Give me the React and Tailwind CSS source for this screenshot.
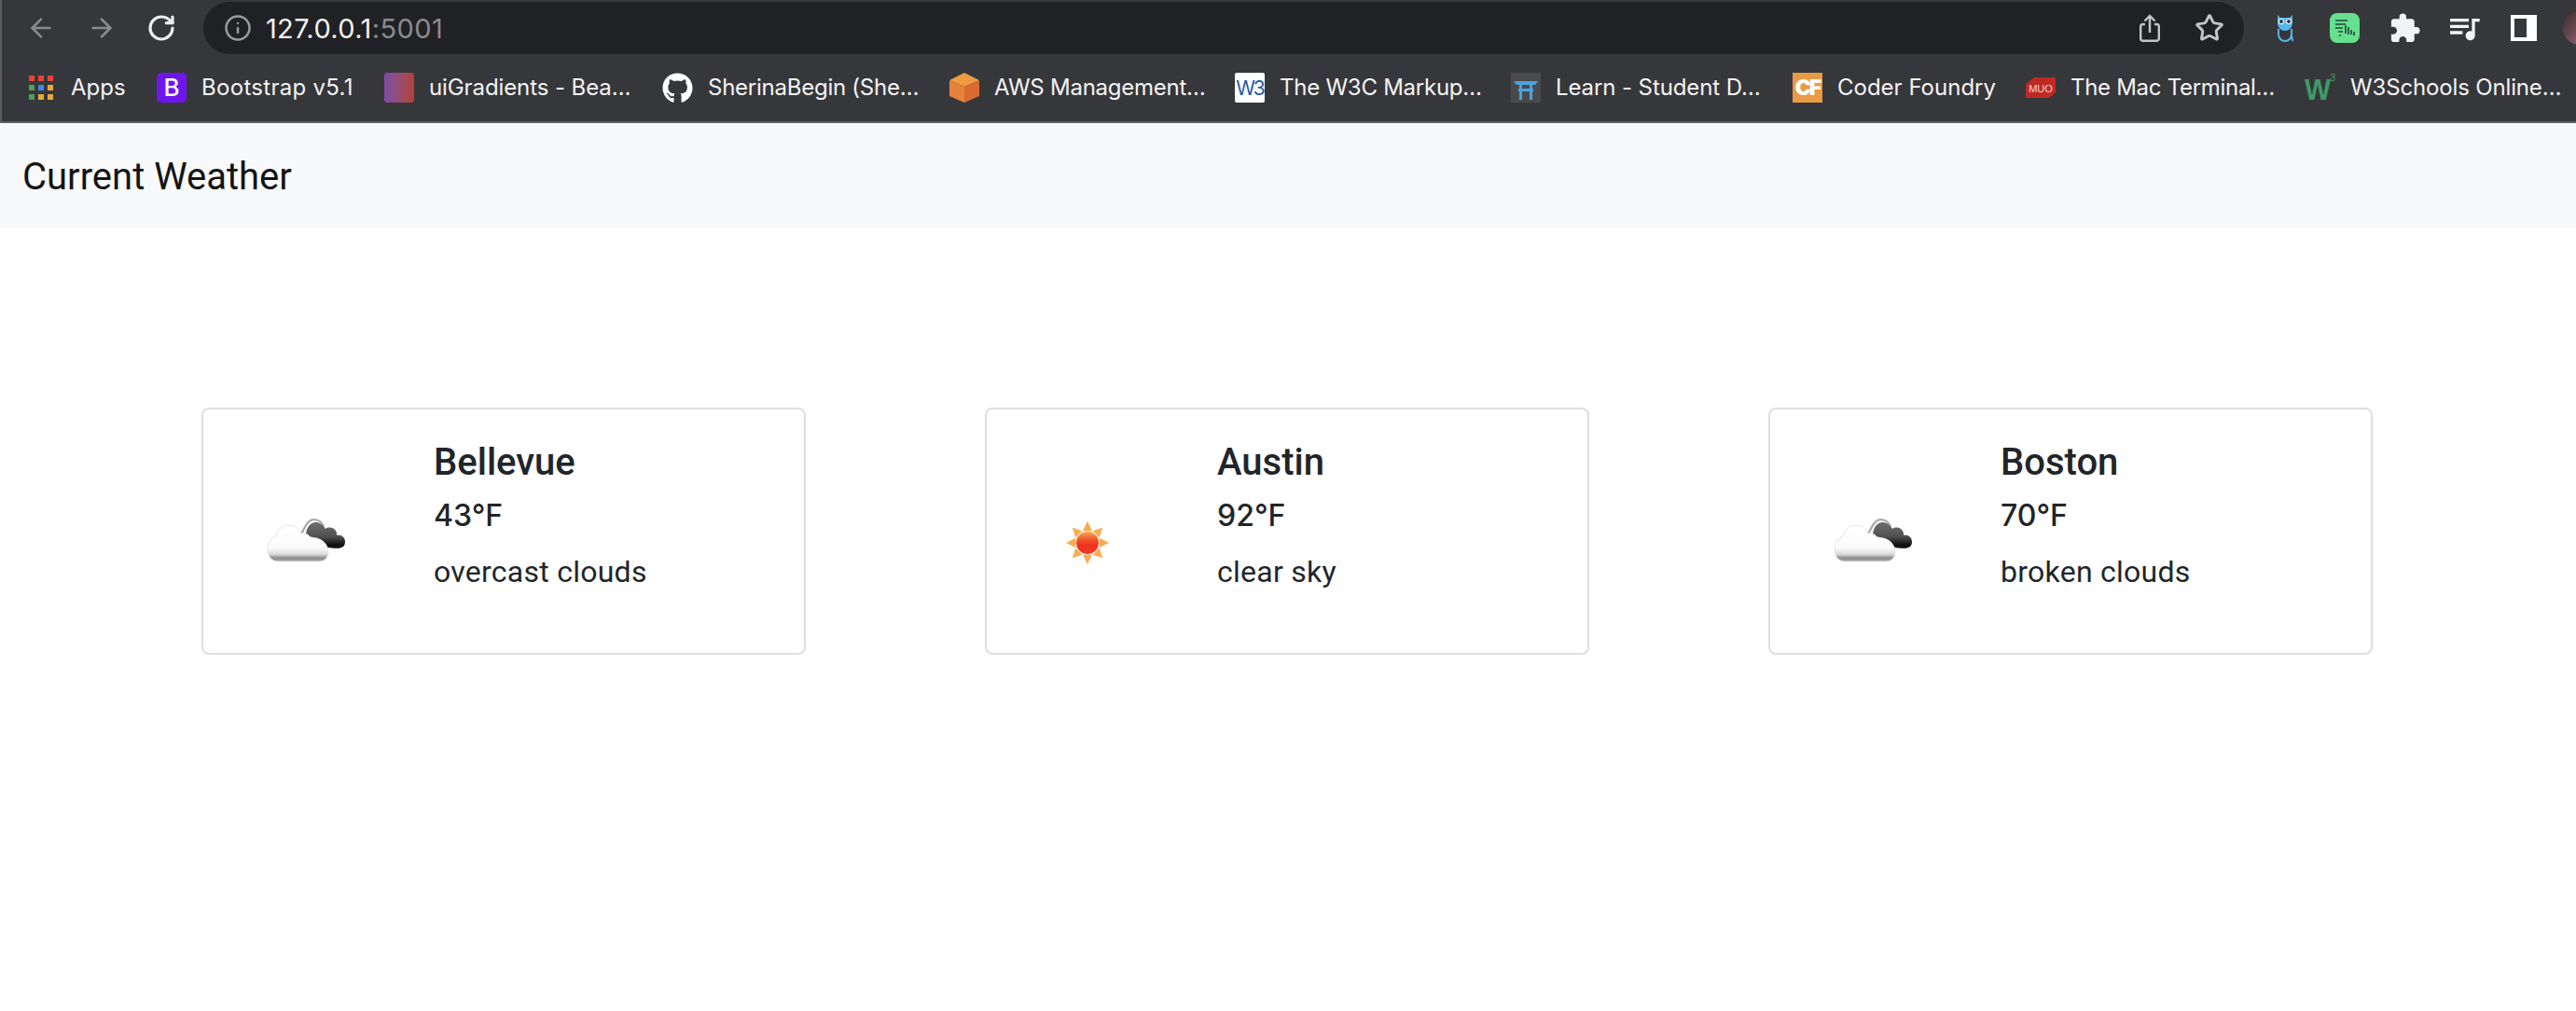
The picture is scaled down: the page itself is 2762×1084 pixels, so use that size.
import React from 'react';
import { ArrowLeft, ArrowRight, RotateCw, Info, Star } from 'lucide-react';
import { FaGithub } from 'react-icons/fa';
import { MdExtension, MdQueueMusic } from 'react-icons/md';

// favicons for the bookmarks bar
const AppsIcon = () => {
  const colors = ['#ea4335', '#ea4335', '#ea4335', '#4f9e5f', '#4285f4', '#e8a73c', '#4f9e5f', '#e8a73c', '#e8a73c'];
  return (
    <div className="grid grid-cols-3 gap-[4px] w-[26px]">
      {colors.map((c, i) => (
        <svg key={i} width="6" height="6"><rect width="6" height="6" fill={c} /></svg>
      ))}
    </div>
  );
};

const BootstrapIcon = () => (
  <div className="w-[32px] h-[32px] rounded-[5px] bg-[#6f16ee] flex items-center justify-center text-white text-[26px] leading-none font-medium">B</div>
);

const GradientIcon = () => (
  <div className="w-[32px] h-[32px] rounded-[3px] bg-gradient-to-r from-[#7b4ba8] to-[#b5402f]" />
);

const AwsIcon = () => (
  <svg width="32" height="32" viewBox="0 0 32 32">
    <polygon points="16,0 32,8 16,15 0,8" fill="#ee9c3f" />
    <polygon points="0,8 16,15 16,32 0,25" fill="#e58239" />
    <polygon points="32,8 16,15 16,32 32,25" fill="#d96a33" />
  </svg>
);

const W3cIcon = () => (
  <div className="w-[32px] h-[32px] rounded-[2px] bg-white flex items-center justify-center text-[#1f5aa6] text-[21px] leading-none font-normal tracking-[-2px]">W3</div>
);

const ToriiIcon = () => (
  <div className="w-[32px] h-[32px] bg-[#4a4a4c] flex items-center justify-center">
    <svg width="26" height="26" viewBox="0 0 26 26">
      <path d="M0 6h26l-3 4H3z" fill="#4aa3df" />
      <path d="M5 14h16v3H5zM6 10h3v16H6zM17 10h3v16h-3z" fill="#4aa3df" />
    </svg>
  </div>
);

const CfIcon = () => (
  <div className="w-[32px] h-[32px] bg-[#e99a45] flex items-center justify-center text-white text-[23px] leading-none font-black tracking-[-2px]">CF</div>
);

const MuoIcon = () => (
  <svg width="32" height="24" viewBox="0 0 32 24">
    <polygon points="9,1 32,1 32,17 25,23 0,23 0,8" fill="#bd2a24" />
    <text x="16" y="17" textAnchor="middle" fill="#f5d5d3" fontSize="11" fontFamily="Liberation Sans, sans-serif">MUO</text>
  </svg>
);

const W3SchoolsIcon = () => (
  <svg width="34" height="32" viewBox="0 0 34 32">
    <text x="0" y="29" fill="#3f9a68" fontSize="32" fontWeight="700" fontFamily="Liberation Sans, sans-serif" textLength="28" lengthAdjust="spacingAndGlyphs">W</text>
    <text x="27" y="9" fill="#3f9a68" fontSize="11" fontFamily="Liberation Sans, sans-serif">3</text>
  </svg>
);

const bookmarks = [
  { label: 'Apps', icon: <AppsIcon />, itemClass: 'w-[137px]', labelClass: 'ml-[19px]' },
  { label: 'Bootstrap v5.1', icon: <BootstrapIcon />, itemClass: 'w-[244px]', labelClass: 'ml-[16px] tracking-[0.3px]' },
  { label: 'uiGradients - Bea…', icon: <GradientIcon />, itemClass: 'w-[298px]', labelClass: 'ml-[16px] tracking-[-0.1px]' },
  { label: 'SherinaBegin (She…', icon: <FaGithub size={33} color="#ffffff" />, itemClass: 'w-[308px]', labelClass: 'ml-[16px] tracking-[-0.25px]' },
  { label: 'AWS Management…', icon: <AwsIcon />, itemClass: 'w-[306px]', labelClass: 'ml-[16px] tracking-[-0.25px]' },
  { label: 'The W3C Markup…', icon: <W3cIcon />, itemClass: 'w-[296px]', labelClass: 'ml-[16px] tracking-[-0.25px]' },
  { label: 'Learn - Student D…', icon: <ToriiIcon />, itemClass: 'w-[302px]', labelClass: 'ml-[16px] tracking-[-0.1px]' },
  { label: 'Coder Foundry', icon: <CfIcon />, itemClass: 'w-[250px]', labelClass: 'ml-[16px]' },
  { label: 'The Mac Terminal…', icon: <MuoIcon />, itemClass: 'w-[299px]', labelClass: 'ml-[16px] tracking-[-0.3px]' },
  { label: 'W3Schools Online…', icon: <W3SchoolsIcon />, itemClass: 'flex-1', labelClass: 'ml-[15px] tracking-[-0.15px]' },
];

const ShareIcon = () => (
  <svg width="22" height="30" viewBox="0 0 22 30" fill="none" stroke="#c4c5c7" strokeWidth="2.4">
    <path d="M6 11H3.500A2.500 2.500 0 0 0 1.200 13.500v12.800a2.500 2.500 0 0 0 2.300 2.500h15a2.500 2.500 0 0 0 2.300-2.500V13.500A2.500 2.500 0 0 0 18.500 11H16" />
    <path d="M11 20V2M5.500 7.500 11 2l5.500 5.500" />
  </svg>
);

const OwlIcon = () => (
  <svg width="18" height="29" viewBox="0 0 18 29" fill="none" stroke="#56b4e9" strokeWidth="2">
    <path d="M1 0l3 3h10l3-3v9a4 4 0 0 1-16 0z" fill="#56b4e9" stroke="none" />
    <circle cx="5" cy="7" r="2.600" fill="#36373b" strokeWidth="1.400" stroke="#cfe9f8" />
    <circle cx="13" cy="7" r="2.600" fill="#36373b" strokeWidth="1.400" stroke="#cfe9f8" />
    <path d="M2 15v6a7 7 0 0 0 14 0v-6M16 21c0 4 1 6 2 7" />
  </svg>
);

const GreenExtIcon = () => (
  <div className="w-[32px] h-[32px] rounded-[8px] bg-[#66e08f] flex items-center justify-center">
    <svg width="22" height="20" viewBox="0 0 22 20" fill="none" stroke="#24463a" strokeWidth="1.600">
      <path d="M1 2h13M1 6h11M1 10h8M4 14h5M5 18h2M12 7v9M15 9v8M18 12v5M21 14v4" />
    </svg>
  </div>
);

const SidePanelIcon = () => (
  <div className="w-[28px] h-[28px] bg-white flex items-stretch p-[4px] pr-[11px]">
    <div className="flex-1 bg-[#36373b]" />
  </div>
);

// the openweather icons, drawn at the size the page shows them
const CloudIcon = () => (
  <svg width="200" height="200" viewBox="0 0 200 200">
    <defs>
      <linearGradient id="whiteCloud" x1="0" y1="0" x2="0" y2="1">
        <stop offset="0" stopColor="#ffffff" />
        <stop offset="0.62" stopColor="#fbfbfb" />
        <stop offset="0.8" stopColor="#dcdcdc" />
        <stop offset="0.9" stopColor="#8e8e8e" />
        <stop offset="1" stopColor="#a6a6a6" />
      </linearGradient>
      <linearGradient id="darkCloud" x1="0" y1="0" x2="0" y2="1">
        <stop offset="0" stopColor="#6e6e6e" />
        <stop offset="0.55" stopColor="#505050" />
        <stop offset="0.9" stopColor="#0a0a0a" />
        <stop offset="1" stopColor="#333333" />
      </linearGradient>
    </defs>
    <path d="M97 91C100 85 103 76 110 75C115 75 119 78 121 82" fill="none" stroke="#a8a8a8" strokeWidth="2.200" />
    <path d="M102 93C102 82 108 77 114 78C119 79 122 83 123 85C129 81 136 86 135 92C141 91 144 95 144 99C144 104 140 106 136 106C128 106 124 105 119 103C116 97 110 92 104 94Z" fill="url(#darkCloud)" />
    <path d="M72 120C64 120 61 113 61 107C61 100 65 95 70 93C72 85 77 81 83 81C90 81 95 85 97 90C101 89 105 91 107 95C116 93 126 100 126 110C126 116 122 120 116 120Z" fill="url(#whiteCloud)" stroke="#e6e6e6" strokeWidth="1" />
  </svg>
);

const SunIcon = () => (
  <svg width="200" height="200" viewBox="0 0 200 200">
    <defs>
      <linearGradient id="sunCore" x1="0" y1="0" x2="0" y2="1">
        <stop offset="0" stopColor="#f9b45a" />
        <stop offset="0.35" stopColor="#f0592a" />
        <stop offset="0.6" stopColor="#ec3420" />
        <stop offset="1" stopColor="#ee3a22" />
      </linearGradient>
    </defs>
    {[0, 45, 90, 135, 180, 225, 270, 315].map((deg) => (
      <polygon key={deg} points="100,77 105,87 95,87" fill="#f9ac4d" transform={`rotate(${deg} 100 100)`} />
    ))}
    <circle cx="100" cy="100" r="12.500" fill="url(#sunCore)" stroke="#fbd9c8" strokeWidth="1.200" />
  </svg>
);

const cities = [
  { name: 'Bellevue', temp: '43°F', desc: 'overcast clouds', icon: <CloudIcon /> },
  { name: 'Austin', temp: '92°F', desc: 'clear sky', icon: <SunIcon /> },
  { name: 'Boston', temp: '70°F', desc: 'broken clouds', icon: <CloudIcon /> },
];

const WeatherCard = ({ city }) => (
  <div className="w-[648px] h-[265px] border-2 border-[#dfdfdf] rounded-[8px] bg-white flex text-[#212529] font-['Roboto',sans-serif]">
    <div className="w-[215px] shrink-0 flex justify-center pt-[43px]">{city.icon}</div>
    <div className="p-[32px]">
      <div className="text-[40px] leading-[48px] font-medium mb-[14px] pt-[1px]">{city.name}</div>
      <div className="text-[32px] leading-[38px] font-medium font-['Inter',sans-serif] mb-[17px]">{city.temp}</div>
      <div className="text-[32px] leading-[48px] tracking-[0.25px]">{city.desc}</div>
    </div>
  </div>
);

const App = () => {
  return (
    <div className="w-[2762px] h-[1084px] overflow-hidden bg-white font-['Inter',sans-serif]">
      {/* browser chrome */}
      <div className="h-[132px] bg-[#36373b] border-l-2 border-b-2 border-[#5c5d61] text-white">
        <div className="h-[58px] pt-[2px] flex items-center">
          <ArrowLeft size={32} color="#8a8b8e" strokeWidth={2} className="ml-[26px]" />
          <ArrowRight size={32} color="#8a8b8e" strokeWidth={2} className="ml-[33px]" />
          <RotateCw size={32} color="#eceded" strokeWidth={2.4} className="ml-[32px]" />
          <div className="ml-[29px] w-[2190px] h-[56px] rounded-[28px] bg-[#202124] flex items-center pl-[22px] pr-[21px]">
            <Info size={30} color="#9a9b9e" strokeWidth={2} />
            <div className="ml-[15px] text-[29px] leading-none tracking-[0.4px] text-[#f1f1f1]">
              127.0.0.1<span className="text-[#8a8b8e]">:5001</span>
            </div>
            <div className="ml-auto"><ShareIcon /></div>
            <Star size={32} color="#c4c5c7" strokeWidth={2.2} className="ml-[37px]" />
          </div>
          <div className="ml-[35px]"><OwlIcon /></div>
          <div className="ml-[39px]"><GreenExtIcon /></div>
          <div className="ml-[34px] w-[29px] flex justify-center"><MdExtension size={35} color="#f1f3f4" className="shrink-0" /></div>
          <div className="ml-[33px] w-[32px] flex justify-center"><MdQueueMusic size={40} color="#f1f3f4" className="shrink-0" /></div>
          <div className="ml-[34px]"><SidePanelIcon /></div>
          <div className="ml-[28px] w-[14px] h-[36px] overflow-hidden">
            <div className="w-[36px] h-[36px] rounded-full bg-gradient-to-br from-[#3a2d28] to-[#a56f88]" />
          </div>
        </div>
        <div className="h-[72px] flex items-center pl-[29px]">
          {bookmarks.map((b) => (
            <div key={b.label} className={`${b.itemClass} flex items-center whitespace-nowrap shrink-0`}>
              {b.icon}
              <span className={`${b.labelClass} text-[24px] leading-none text-[#f4f4f4]`}>{b.label}</span>
            </div>
          ))}
        </div>
      </div>

      {/* navbar */}
      <div className="h-[113px] bg-[#f8f9fa] flex items-center pl-[24px] pt-[2px] text-[40px] text-[#141414] font-['Roboto',sans-serif]">
        Current Weather
      </div>

      {/* cards */}
      <div className="mt-[192px] pl-[216px] flex gap-[192px]">
        {cities.map((city) => (
          <WeatherCard key={city.name} city={city} />
        ))}
      </div>
    </div>
  );
};

export default App;
